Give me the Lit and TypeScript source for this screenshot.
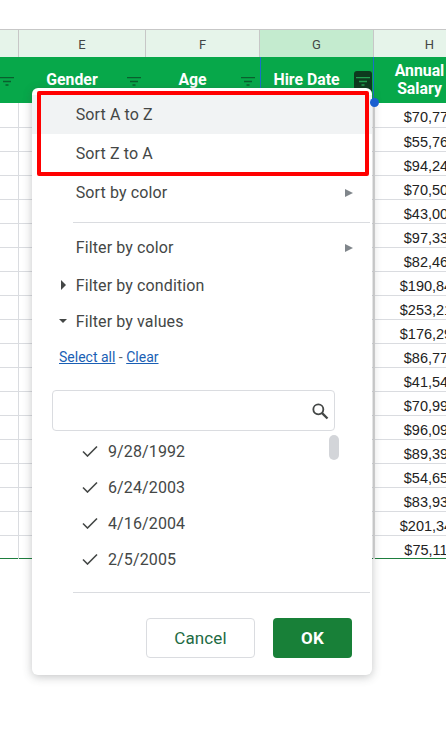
import { LitElement, html, css, svg } from "lit";
import { customElement } from "lit/decorators.js";

const SALARIES = ["$70,776","$55,766","$94,243","$70,506","$43,003","$97,335","$82,462","$190,845","$253,216","$176,294","$86,776","$41,545","$70,992","$96,090","$89,399","$54,654","$83,935","$201,345","$75,119"];

const filterIcon = svg`<svg class="fi" viewBox="0 0 14 9" width="14" height="9"><path d="M0 .7h14M3 4.5h8M5.5 8h3" fill="none" stroke="currentColor" stroke-width="1.3"/></svg>`;

@customElement("app-root")
export class AppRoot extends LitElement {
  static styles = css`
    :host { display:block; position:relative; width:446px; height:735px; overflow:hidden; background:#fff; font-family:"Liberation Sans",Arial,sans-serif; }
    .sheet { padding-top:29px; width:446px; overflow:hidden; }
    .cols, .head, .row { display:grid; grid-template-columns:19px 127px 114px 114px 112px; width:486px; }
    .cols { height:28px; border-top:1px solid #c7c7c7; box-sizing:border-box; background:#e6f4ea; }
    .cols > div { display:flex; align-items:center; justify-content:center; font:13px "Roboto",sans-serif; color:#444746; border-right:1px solid #c7c7c7; padding-top:1px; box-sizing:border-box; }
    .cols > div.sel { background:#c4ebcf; }
    .head { height:46px; background:#07a84a; color:#fff; font:700 15.8px/18px "Roboto",sans-serif; }
    .head > div { position:relative; display:flex; align-items:center; justify-content:center; box-sizing:border-box; }
    .head .fi { position:absolute; right:5px; top:20px; color:#0a5f2e; }
    .head .sel { border-left:1px solid #1a6fc9; border-right:1px solid #1a6fc9; }
    .head .lab { padding-right:21px; text-align:center; }
    .head .btn { position:absolute; right:1px; top:14px; width:18px; height:22px; background:#0d3a1e; border-radius:3px; color:#22a050; }
    .head .btn .fi { right:2px; top:6px; color:#22a050; }
    .row { height:24px; box-sizing:border-box; border-top:1px solid #dadce0; }
    .row.first { border-top:0; }
    .row.last { border-bottom:1px solid #1e7e3e; }
    .row > div { border-right:1px solid #dadce0; box-sizing:border-box; }
    .row > div.v { font-size:14.5px; line-height:23px; padding-top:2.5px; color:#222; text-align:center; border:0; white-space:nowrap; }
    .dot { position:absolute; left:370px; top:98px; width:9px; height:9px; border-radius:50%; background:#1a5fd0; }
    .vline { position:absolute; left:373px; top:103px; width:2px; height:456px; background:#d8d8d8; }

    .menu { position:absolute; left:32px; top:88px; width:340px; height:587px; background:#fff; border-radius:6px; box-shadow:0 2px 10px rgba(60,64,67,.3); font:16px "Roboto",sans-serif; letter-spacing:.12px; color:#444746; box-sizing:border-box; padding-top:7px; }
    .mark { position:absolute; left:5px; top:3px; width:332px; height:85px; border:4px solid #f00; box-sizing:border-box; border-radius:2px; pointer-events:none; }
    .item { height:39px; padding-left:43.7px; display:flex; align-items:center; position:relative; }
    .item.hover { background:#f1f3f4; }
    .arr { position:absolute; right:19px; top:50%; margin-top:-4px; width:0; height:0; border-left:8px solid #80868b; border-top:4px solid transparent; border-bottom:4px solid transparent; }
    .sep { height:1px; background:#dadce0; margin-left:41px; margin-right:2px; }
    .after1 { margin-top:9.5px; margin-bottom:5.5px; }
    .item.exp { height:36px; }
    .tri-r { position:absolute; left:29px; top:50%; margin-top:-5px; width:0; height:0; border-left:5px solid #444746; border-top:5px solid transparent; border-bottom:5px solid transparent; }
    .tri-d { position:absolute; left:27px; top:50%; margin-top:-2px; width:0; height:0; border-top:4.5px solid #444746; border-left:4.5px solid transparent; border-right:4.5px solid transparent; }
    .links { margin:8px 0 0 27px; font-size:14px; letter-spacing:0; line-height:20px; color:#5f6368; }
    .links a { color:#1a5fb4; text-decoration:underline; }
    .search { margin:23px 0 0 20px; width:283px; height:41px; border:1px solid #dadce0; border-radius:4px; box-sizing:border-box; display:flex; align-items:center; justify-content:flex-end; padding-right:4px; }
    .list { position:relative; height:159px; margin-top:2px; }
    .val { height:36px; padding-left:76px; display:flex; align-items:center; position:relative; }
    .val svg { position:absolute; left:49.5px; top:12px; }
    .thumb { position:absolute; left:297px; top:2px; width:10px; height:25px; background:#d3d5d9; border-radius:5px; }
    .foot { display:flex; justify-content:flex-end; gap:18px; padding-right:20px; margin-top:24.5px; }
    .foot div { height:40px; display:flex; align-items:center; justify-content:center; border-radius:4px; box-sizing:border-box; font-size:17px; }
    .cancel { width:109px; border:1px solid #dadce0; color:#1e6b43; }
    .ok { width:79px; background:#188038; color:#fff; font-weight:700; }
  `;

  render() {
    return html`
      <div class="sheet">
        <div class="cols"><div></div><div>E</div><div>F</div><div class="sel">G</div><div>H</div></div>
        <div class="head">
          <div>${filterIcon}</div>
          <div><span class="lab">Gender</span>${filterIcon}</div>
          <div><span class="lab">Age</span>${filterIcon}</div>
          <div class="sel"><span class="lab">Hire Date</span><span class="btn">${filterIcon}</span></div>
          <div><span class="lab">Annual<br />Salary</span></div>
        </div>
        ${SALARIES.map((s, i) => html`<div class="row ${i === 0 ? "first" : ""} ${i === SALARIES.length - 1 ? "last" : ""}"><div></div><div></div><div></div><div></div><div class="v">${s}</div></div>`)}
      </div>
      <div class="vline"></div>
      <div class="menu">
        <div class="item hover">Sort A to Z</div>
        <div class="item">Sort Z to A</div>
        <div class="item">Sort by color<span class="arr"></span></div>
        <div class="sep after1"></div>
        <div class="item">Filter by color<span class="arr"></span></div>
        <div class="item exp"><span class="tri-r"></span>Filter by condition</div>
        <div class="item exp"><span class="tri-d"></span>Filter by values</div>
        <div class="links"><a>Select all</a> - <a>Clear</a></div>
        <div class="search">
          <svg viewBox="0 0 24 24" width="20" height="20"><circle cx="10" cy="10" r="6" fill="none" stroke="#444746" stroke-width="2.2"/><path d="M14.5 14.5L21 21" stroke="#444746" stroke-width="2.8"/></svg>
        </div>
        <div class="list">
          ${["9/28/1992", "6/24/2003", "4/16/2004", "2/5/2005"].map((d) => html`<div class="val"><svg viewBox="0 0 16 12" width="16" height="12"><path d="M1 6.5L5.5 11L15 1.5" fill="none" stroke="#444746" stroke-width="1.6"/></svg>${d}</div>`)}
          <div class="thumb"></div>
        </div>
        <div class="sep"></div>
        <div class="foot"><div class="cancel">Cancel</div><div class="ok">OK</div></div>
        <div class="mark"></div>
      </div>
      <div class="dot"></div>
    `;
  }
}
